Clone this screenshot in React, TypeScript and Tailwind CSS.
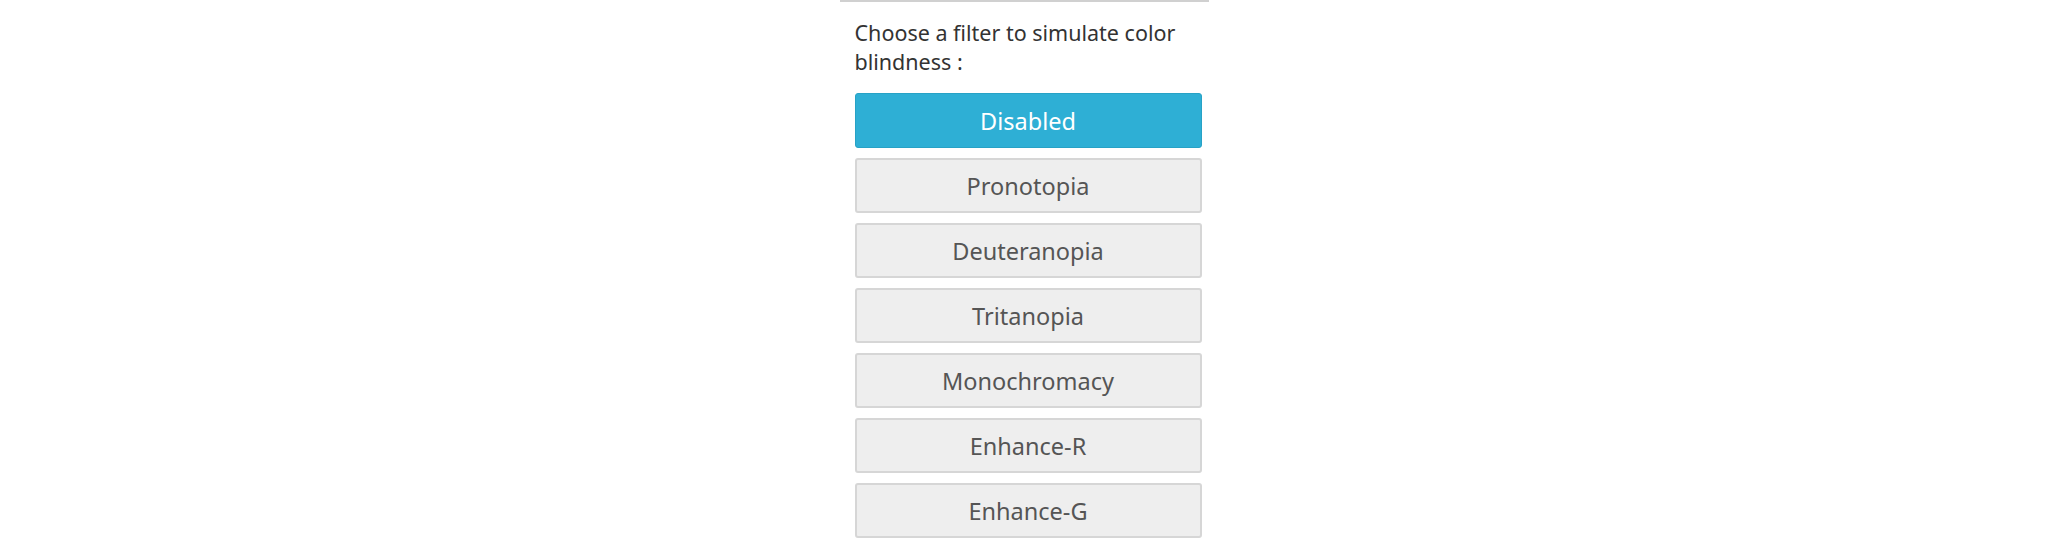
const filters = [
  'Pronotopia',
  'Deuteranopia',
  'Tritanopia',
  'Monochromacy',
  'Enhance-R',
  'Enhance-G',
];

export default function App() {
  return (
    <div className="w-full h-[542px] overflow-hidden bg-white" style={{ fontFamily: '"Noto Sans", "Open Sans", sans-serif' }}>
      <div className="mx-auto w-[369px] border-t-2 border-[#d0d0d0] pl-[15px] pr-[7px] pt-[16px]">
        <p className="text-[21.5px] leading-[29px] text-[#333]">
          Choose a filter to simulate color blindness :
        </p>
        <div className="mt-[17px] flex flex-col gap-[10px]">
          <button className="h-[55px] w-full rounded-[3px] border border-[#27a2c6] bg-[#2eafd5] pt-[3px] text-[23.5px] text-white">
            Disabled
          </button>
          {filters.map((f) => (
            <button
              key={f}
              className="h-[55px] w-full rounded-[3px] border-2 border-[#d6d6d6] bg-[#eeeeee] pt-[3px] text-[23.5px] text-[#555]"
            >
              {f}
            </button>
          ))}
        </div>
      </div>
    </div>
  );
}
